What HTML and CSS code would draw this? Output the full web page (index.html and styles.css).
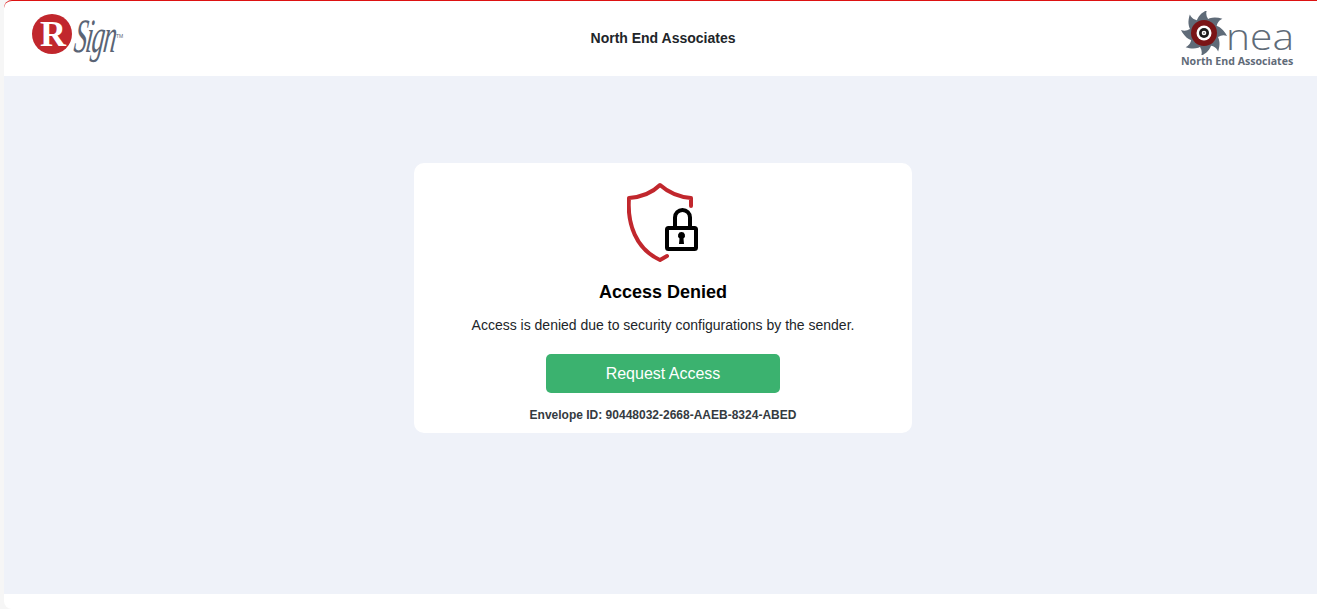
FILE: index.html
```html
<!DOCTYPE html>
<html lang="en">
<head>
<meta charset="utf-8">
<title>Access Denied</title>
<link rel="stylesheet" href="styles.css">
</head>
<body>
<div class="page">
  <header class="header">
    <div class="rsign">
      <span class="rsign-circle">R</span>
      <span class="rsign-word">Sign</span>
      <span class="rsign-tm">TM</span>
    </div>
    <div class="company">North End Associates</div>
    <div class="nea">
      <div class="nea-top">
        <svg class="nea-mark" width="46" height="44" viewBox="0 0 46 44" aria-hidden="true">
          <defs>
            <path id="blade" d="M-8 -9 C-7 -16 -3 -20 3 -23 C1 -18 3 -14 9 -8 Z"/>
          </defs>
          <g transform="translate(23 22)">
            <g fill="#5f6b78">
              <use href="#blade"/>
              <use href="#blade" transform="rotate(45)"/>
              <use href="#blade" transform="rotate(90)"/>
              <use href="#blade" transform="rotate(135)"/>
              <use href="#blade" transform="rotate(180)"/>
              <use href="#blade" transform="rotate(225)"/>
              <use href="#blade" transform="rotate(270)"/>
              <use href="#blade" transform="rotate(315)"/>
            </g>
            <circle r="13" fill="#7a1416"/>
            <circle r="7.500" fill="#fff"/>
            <circle r="5" fill="#1c1c1c"/>
            <circle r="2.300" fill="#fff"/>
            <circle r="0.800" fill="#333"/>
          </g>
        </svg>
        <span class="nea-word">nea</span>
      </div>
      <div class="nea-name">North End Associates</div>
    </div>
  </header>
  <main class="main">
    <section class="card">
      <svg class="shield" width="72" height="80" viewBox="0 0 72 80" aria-hidden="true">
        <path class="shield-line" d="M64 24 V16 C52 15 42 11 33 3 C25 11 14 15 2 16 C0 42 9 67 33 78 L40 74"/>
        <path class="lock-line" d="M48 46 V35.500 A7.500 7.500 0 0 1 63 35.500 V46"/>
        <rect class="lock-line" x="40" y="46" width="29" height="21" rx="1.500"/>
        <path class="lock-key" d="M54.500 50 a3.500 3.500 0 0 1 2 6.400 L57 62 H52 L52.500 56.400 A3.500 3.500 0 0 1 54.500 50 Z"/>
      </svg>
      <h1 class="title">Access Denied</h1>
      <p class="message">Access is denied due to security configurations by the sender.</p>
      <button class="request" type="button">Request Access</button>
      <p class="envelope">Envelope ID: 90448032-2668-AAEB-8324-ABED</p>
    </section>
  </main>
</div>
</body>
</html>
```

FILE: styles.css
```css
* {
  box-sizing: border-box;
}

html,
body {
  margin: 0;
  height: 100%;
}

body {
  background: #f6f6f6;
  font-family: "Liberation Sans", Arial, sans-serif;
  overflow: hidden;
}

.page {
  height: 609px;
  margin-left: 4px;
  background: #fff;
  border-top: 1px solid #dd1212;
  border-radius: 8px 0 0 8px;
  display: flex;
  flex-direction: column;
}

.header {
  height: 75px;
  flex: none;
  display: grid;
  grid-template-columns: 1fr auto 1fr;
  align-items: center;
  padding: 0 23px 0 28px;
}

.rsign {
  display: flex;
  align-items: flex-start;
  align-self: start;
  margin-top: 13px;
}

.rsign-circle {
  width: 40px;
  height: 40px;
  flex: none;
  border-radius: 50%;
  background: #c1272d;
  color: #fff;
  font: bold 36px/40px "Liberation Serif", serif;
  text-align: center;
  padding-left: 2px;
}

.rsign-word {
  width: 41px;
  flex: none;
  margin: -2px 0 0 3px;
  font: italic 48px/48px "Liberation Serif", serif;
  letter-spacing: -2px;
  color: #5a6475;
  transform: scaleX(0.53) skewX(-14deg);
  transform-origin: left center;
  white-space: nowrap;
}

.rsign-tm {
  margin: 19px 0 0 0;
  font-size: 5px;
  line-height: 6px;
  color: #5a6475;
}

.company {
  font-size: 14px;
  font-weight: bold;
  color: #212529;
  margin-top: -1px;
  text-align: center;
}

.nea {
  justify-self: end;
  width: 113px;
  display: flex;
  flex-direction: column;
}

.nea-top {
  display: flex;
  align-items: flex-end;
  height: 44px;
}

.nea-mark {
  flex: none;
}

.nea-word {
  margin: 0 0 2px -1px;
  font: 300 37px/34px "Open Sans", sans-serif;
  color: #5f6b78;
  transform: scaleX(1.1);
  transform-origin: left center;
}

.nea-name {
  font: bold 10.600px/12px "Open Sans", sans-serif;
  color: #5f6b78;
  white-space: nowrap;
}

.main {
  flex: 1;
  margin-bottom: 15px;
  padding: 87px 0 0 5px;
  background: #eff2f9;
  display: flex;
  justify-content: center;
  align-items: flex-start;
}

.card {
  width: 498px;
  height: 270px;
  background: #fff;
  border-radius: 10px;
  display: flex;
  flex-direction: column;
  align-items: center;
  padding-top: 19px;
}

.shield {
  flex: none;
}

.shield-line {
  fill: none;
  stroke: #c1272d;
  stroke-width: 4;
  stroke-linecap: round;
  stroke-linejoin: round;
}

.lock-line {
  fill: none;
  stroke: #000;
  stroke-width: 4;
  stroke-linejoin: round;
}

.lock-key {
  fill: #000;
}

.title {
  margin: 20px 0 0;
  font-size: 18px;
  line-height: 21px;
  font-weight: bold;
  color: #000;
}

.message {
  margin: 14px 0 0;
  font-size: 14px;
  line-height: 16px;
  color: #212529;
}

.request {
  width: 234px;
  height: 39px;
  margin-top: 21px;
  border: 0;
  border-radius: 5px;
  background: #3bb26f;
  color: #fff;
  font: 16px "Liberation Sans", Arial, sans-serif;
}

.envelope {
  margin: 15px 0 0;
  font-size: 12px;
  line-height: 14px;
  font-weight: bold;
  color: #343a40;
}
```
